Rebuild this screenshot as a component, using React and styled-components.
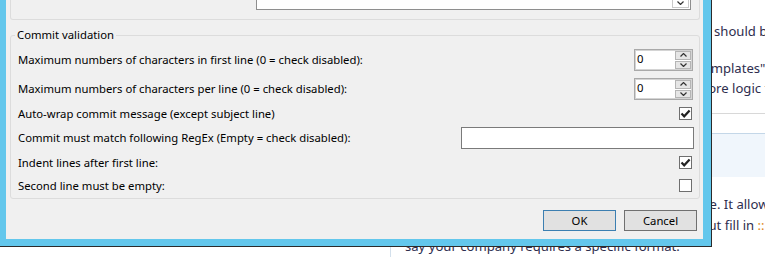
import React from "react";
import styled, { createGlobalStyle } from "styled-components";

const Global = createGlobalStyle`
  html, body { margin: 0; padding: 0; background: #fff; }
  body { font-family: "Noto Sans", "Open Sans", sans-serif; }
`;

const Screen = styled.div`
  position: relative;
  width: 765px;
  height: 257px;
  overflow: hidden;
  background: #fff;
`;

/* ---------- background document ---------- */
const DocColumn = styled.div`
  margin-left: 390px;
  height: 257px;
  box-sizing: border-box;
  border-left: 1px solid #d3e0ec;
  padding: 21px 0 0 14px;
  display: flex;
  flex-direction: column;
  font-family: "Noto Sans", sans-serif;
  font-size: 13.1px;
  color: #2e2e4e;
  white-space: nowrap;
`;

const Para = styled.div`
  line-height: ${(p) => p.$lh || 20}px;
  margin-top: ${(p) => p.$mt || 0}px;
`;

const Rule = styled.div`
  margin-top: ${(p) => p.$mt || 0}px;
  height: 1px;
  background: #d8d8d8;
`;

const NoteBand = styled.div`
  margin-top: ${(p) => p.$mt || 0}px;
  height: 43px;
  border-top: 1px solid #c4d7e8;
  background: #f0f6fc;
`;

const Code = styled.span`
  color: #e08a1e;
`;

/* ---------- dialog window ---------- */
const Window = styled.div`
  position: absolute;
  left: 0;
  top: 0;
  width: 697px;
  height: 239px;
  padding: 0 8px 7px 6px;
  background: #63c7ec;
  border-right: 1px solid #2b2b2b;
  border-bottom: 1px solid #2b2b2b;
`;

const Client = styled.div`
  height: 239px;
  box-sizing: border-box;
  background: #f0f0f0;
  padding: 0 3px 0 4px;
  display: flex;
  flex-direction: column;
  font-family: "Noto Sans", "Open Sans", sans-serif;
  font-size: 11.3px;
  color: #000;
`;

const PrevGroup = styled.div`
  height: 20px;
  box-sizing: border-box;
  border: 1px solid #dcdcdc;
  border-top: none;
  border-radius: 0 0 3px 3px;
  display: flex;
  justify-content: flex-end;
  padding-right: 8px;
`;

const Combo = styled.div`
  width: 435px;
  height: 10px;
  box-sizing: border-box;
  background: #fff;
  border: 1px solid #8e8e8e;
  border-top: none;
  display: flex;
  justify-content: flex-end;
  padding-right: 1px;
`;

const ComboButton = styled.div`
  width: 17px;
  height: 8px;
  box-sizing: border-box;
  border: 1px solid #c9c9c9;
  border-top: none;
  background: #fff;
  display: flex;
  justify-content: center;
  align-items: flex-start;
  padding-top: 1px;
`;

const Group = styled.fieldset`
  margin: 7px 0 0 0;
  padding: 6px 5px 6px 7px;
  border: 1px solid #dcdcdc;
  border-radius: 3px;
  display: flex;
  flex-direction: column;
  gap: 7px;
  min-width: 0;
`;

const Legend = styled.legend`
  margin-left: -3px;
  padding: 0 2px;
  font-size: 11.3px;
  line-height: 16px;
`;

const Row = styled.div`
  height: ${(p) => p.$h}px;
  margin-top: ${(p) => p.$mt || 0}px;
  display: flex;
  align-items: center;
  justify-content: space-between;
`;

const Label = styled.span`
  white-space: nowrap;
  line-height: 16px;
`;

const Spin = styled.div`
  width: 59px;
  height: 22px;
  box-sizing: border-box;
  border: 1px solid #a9a9a9;
  box-shadow: inset 0 0 0 1px #d4d4d4;
  background: #fff;
  display: flex;
  margin-right: 1px;
`;

const SpinValue = styled.div`
  flex: 1;
  padding: 2px 0 0 2px;
  font-size: 11.3px;
  line-height: 14px;
`;

const SpinButtons = styled.div`
  width: 16px;
  display: flex;
  flex-direction: column;
  gap: 1px;
  padding: 1px 1px 1px 0;
`;

const SpinBtn = styled.div`
  flex: 1;
  background: #e6e6e6;
  border: 1px solid #b5b5b5;
  display: flex;
  align-items: center;
  justify-content: center;
`;

const Check = styled.div`
  width: 13px;
  height: 13px;
  box-sizing: border-box;
  border: 1px solid #6f6f6f;
  background: #fff;
  margin-right: 2px;
  display: flex;
  align-items: center;
  justify-content: center;
`;

const TextBox = styled.div`
  width: 233px;
  height: 22px;
  box-sizing: border-box;
  border: 1px solid #7a7a7a;
  background: #fff;
`;

const Footer = styled.div`
  margin-top: 11px;
  padding-right: 3px;
  display: flex;
  justify-content: flex-end;
  gap: 8px;
`;

const Button = styled.button`
  width: 73px;
  height: 21px;
  box-sizing: border-box;
  background: #e1e1e1;
  border: 1px solid ${(p) => (p.$default ? "#3c7fb1" : "#707070")};
  font-family: inherit;
  font-size: 11.3px;
  color: #000;
  padding: 0;
`;

const ChevronUp = () => (
  <svg width="7" height="4" viewBox="0 0 7 4">
    <polyline points="0.5,3.5 3.5,0.5 6.5,3.5" fill="none" stroke="#333" strokeWidth="1.2" />
  </svg>
);
const ChevronDown = () => (
  <svg width="7" height="4" viewBox="0 0 7 4">
    <polyline points="0.5,0.5 3.5,3.5 6.5,0.5" fill="none" stroke="#333" strokeWidth="1.2" />
  </svg>
);
const CheckMark = () => (
  <svg width="11" height="11" viewBox="0 0 11 11">
    <polyline points="1.5,5.5 4.2,8.3 9.6,2.4" fill="none" stroke="#222" strokeWidth="2.2" />
  </svg>
);

const SpinBox = ({ value }) => (
  <Spin>
    <SpinValue>{value}</SpinValue>
    <SpinButtons>
      <SpinBtn><ChevronUp /></SpinBtn>
      <SpinBtn><ChevronDown /></SpinBtn>
    </SpinButtons>
  </Spin>
);

const CheckBox = ({ checked }) => <Check>{checked && <CheckMark />}</Check>;

export default function App() {
  return (
    <Screen>
      <Global />
      <DocColumn>
        <Para>Here, you can define what every commit message should be formatted like.</Para>
        <Para $mt={17}>
          Alternatively, you can also use the old "Commit Templates" feature
          <br />
          These are much more flexible, but require a bit more logic to set up.
        </Para>
        <Rule $mt={15} />
        <NoteBand $mt={19} />
        <Para $mt={17} $lh={21}>
          The template feature is quite handy for private use. It allows you
          <br />
          to not have to write the entire commit message but fill in <Code>::</Code>
          <br />
          say your company requires a specific format.
        </Para>
      </DocColumn>

      <Window>
        <Client>
          <PrevGroup>
            <Combo>
              <ComboButton><ChevronDown /></ComboButton>
            </Combo>
          </PrevGroup>

          <Group>
            <Legend>Commit validation</Legend>
            <Row $h={22}>
              <Label>Maximum numbers of characters in first line (0 = check disabled):</Label>
              <SpinBox value="0" />
            </Row>
            <Row $h={22}>
              <Label>Maximum numbers of characters per line (0 = check disabled):</Label>
              <SpinBox value="0" />
            </Row>
            <Row $h={13}>
              <Label>Auto-wrap commit message (except subject line)</Label>
              <CheckBox checked />
            </Row>
            <Row $h={22}>
              <Label>Commit must match following RegEx (Empty = check disabled):</Label>
              <TextBox />
            </Row>
            <Row $h={13}>
              <Label>Indent lines after first line:</Label>
              <CheckBox checked />
            </Row>
            <Row $h={13} $mt={3}>
              <Label>Second line must be empty:</Label>
              <CheckBox />
            </Row>
          </Group>

          <Footer>
            <Button $default>OK</Button>
            <Button>Cancel</Button>
          </Footer>
        </Client>
      </Window>
    </Screen>
  );
}
